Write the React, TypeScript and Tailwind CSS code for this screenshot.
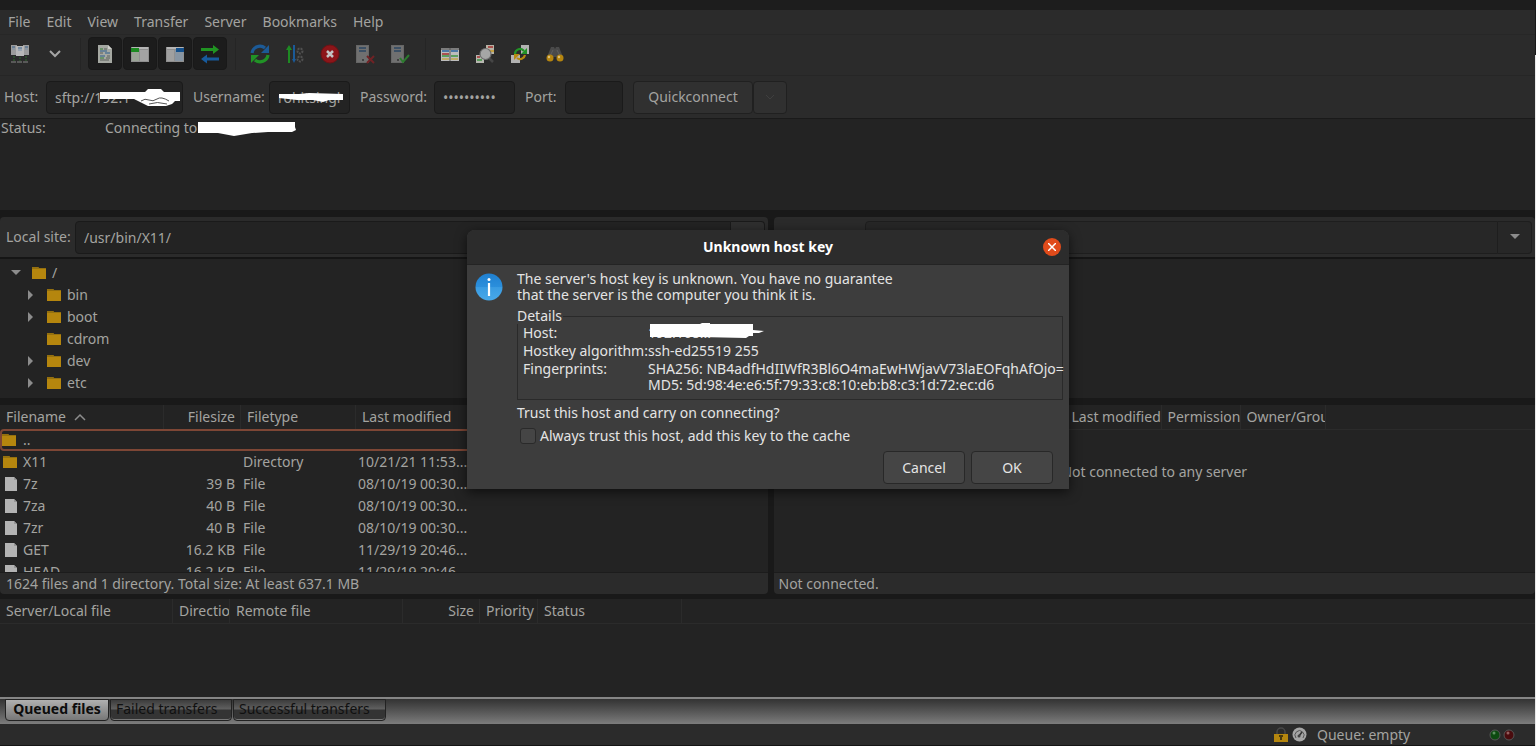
import { type ReactNode } from "react";

const menus = ["File", "Edit", "View", "Transfer", "Server", "Bookmarks", "Help"];

function SiteManagerIcon() {
  return (
    <svg width="20" height="20" viewBox="0 0 20 20">
      <rect x="1" y="1" width="6" height="10" fill="#9c9c9c" />
      <rect x="13" y="1" width="6" height="10" fill="#9c9c9c" />
      <rect x="6" y="2" width="8" height="10" fill="#b8b8b8" />
      <path d="M2 3h3M15 3h3M8 4h4" stroke="#37618c" strokeWidth="1" />
      <path d="M2 5h3M15 5h3M8 6h4" stroke="#7890a8" strokeWidth="1" />
      <path d="M4 12v5M10 13v4M16 12v5" stroke="#2f6a2c" strokeWidth="1" strokeDasharray="2 1" />
      <path d="M1 18h18" stroke="#595959" strokeWidth="2" strokeDasharray="5 1" />
    </svg>
  );
}

function LogIcon() {
  return (
    <svg width="20" height="20" viewBox="0 0 20 20">
      <path d="M3 1h10l4 4v14H3z" fill="#a5a8a2" />
      <path d="M13 1l4 4h-4z" fill="#d0d0cc" />
      <path d="M5 5h3M5 14h4" stroke="#2f7f31" strokeWidth="1" />
      <path d="M5 7h7M10 9h5M5 12h5" stroke="#2b5c8d" strokeWidth="1" />
      <path d="M5 9h3M12 12h3M11 14h4M5 16h9M9 5h3" stroke="#5b5e5a" strokeWidth="1" />
    </svg>
  );
}

function TreeIcon({ remote = false }: { remote?: boolean }) {
  return (
    <svg width="20" height="20" viewBox="0 0 20 20">
      <rect x="1" y="3" width="18" height="15" fill="#8f8f8f" />
      <rect x="2" y="3" width="16" height="2" fill="#b5b5b5" />
      <rect x="2" y="6" width="7" height="11" fill={remote ? "#a0a0a0" : "#9aa496"} />
      <rect x="10" y="6" width="8" height="11" fill={remote ? "#8795a3" : "#a3a3a3"} />
      {remote ? (
        <rect x="11" y="4" width="8" height="4" fill="#14508c" />
      ) : (
        <rect x="1" y="4" width="8" height="4" fill="#1b8a20" />
      )}
    </svg>
  );
}

function QueueIcon() {
  return (
    <svg width="20" height="20" viewBox="0 0 20 20">
      <path d="M1 4h12V1l6 4.500-6 4.500V7H1z" fill="#209422" />
      <path d="M19 13.500H7v-3l-6 4.500 6 4.500v-3h12z" fill="#175a9c" />
    </svg>
  );
}

function RefreshIcon() {
  return (
    <svg width="20" height="20" viewBox="0 0 20 20">
      <path d="M2 9a8 8 0 0 1 13-5" fill="none" stroke="#1c5a96" strokeWidth="3.200" />
      <path d="M19 1v8h-8z" fill="#1c5a96" />
      <path d="M18 11a8 8 0 0 1-13 5" fill="none" stroke="#219326" strokeWidth="3.200" />
      <path d="M1 19v-8h8z" fill="#219326" />
    </svg>
  );
}

function FilterIcon() {
  return (
    <svg width="20" height="20" viewBox="0 0 20 20">
      <path d="M4 19V4" stroke="#1e8a23" strokeWidth="2" />
      <path d="M4 1l3 5H1z" fill="#1e8a23" />
      <path d="M9 1v14" stroke="#1b5a98" strokeWidth="2" />
      <path d="M9 19l-2-4h4z" fill="#1b5a98" />
      <circle cx="15" cy="7" r="2.500" fill="none" stroke="#505050" strokeWidth="2" strokeDasharray="2 1" />
      <circle cx="15" cy="15" r="2.500" fill="none" stroke="#505050" strokeWidth="2" strokeDasharray="2 1" />
    </svg>
  );
}

function CancelIcon() {
  return (
    <svg width="20" height="20" viewBox="0 0 20 20">
      <circle cx="10" cy="10" r="9" fill="#8c1519" stroke="#6f1215" />
      <path d="M7 7l6 6M13 7l-6 6" stroke="#c4c4c4" strokeWidth="2.500" />
    </svg>
  );
}

function ServerIcon({ connect = false }: { connect?: boolean }) {
  return (
    <svg width="20" height="20" viewBox="0 0 20 20">
      <rect x="1" y="1" width="13" height="18" fill="#666" />
      <rect x="2" y="2" width="11" height="16" fill="#707070" />
      <path d="M4 4h7M4 7h7" stroke="#2b4662" strokeWidth="1.500" />
      <circle cx="8" cy="16" r="1" fill="#333" />
      {connect ? (
        <path d="M10 14l3 4 6-7" fill="none" stroke="#2b7a2d" strokeWidth="2" />
      ) : (
        <path d="M12 12l7 7M19 12l-7 7" stroke="#702225" strokeWidth="2" />
      )}
    </svg>
  );
}

function CompareIcon() {
  return (
    <svg width="20" height="20" viewBox="0 0 20 20">
      <rect x="1" y="4" width="18" height="13" fill="#bcbcbc" />
      <path d="M1 5h18" stroke="#7c7c7c" strokeWidth="2" />
      <path d="M2 7h7M11 7h7" stroke="#28619d" strokeWidth="1.500" />
      <path d="M2 10h7" stroke="#a52e2e" strokeWidth="1.500" />
      <path d="M2 12h7M11 12h7" stroke="#3d9440" strokeWidth="1.500" />
      <path d="M2 15h7M11 15h7" stroke="#c0a54b" strokeWidth="1.500" />
      <path d="M10 4v13" stroke="#555" strokeWidth="1" />
    </svg>
  );
}

function SearchFilesIcon() {
  return (
    <svg width="20" height="20" viewBox="0 0 20 20">
      <rect x="11" y="1" width="8" height="9" fill="#b7b2a4" />
      <path d="M13 3h5" stroke="#a52e2e" strokeWidth="1.500" />
      <path d="M15 7h4" stroke="#c79a21" strokeWidth="1.500" />
      <rect x="1" y="11" width="8" height="8" fill="#b7b7b0" />
      <path d="M2 13h3" stroke="#a52e2e" strokeWidth="1.500" />
      <path d="M2 16h5" stroke="#38913c" strokeWidth="1.500" />
      <path d="M14 14l4 4" stroke="#464646" strokeWidth="2.500" />
      <circle cx="10.500" cy="10" r="5.500" fill="#a6a6a6" stroke="#6c6c6c" strokeWidth="1.200" />
    </svg>
  );
}

function SyncIcon() {
  return (
    <svg width="20" height="20" viewBox="0 0 20 20">
      <rect x="11" y="1" width="8" height="9" fill="#b2b2b2" />
      <rect x="1" y="11" width="9" height="8" fill="#b2b2b2" />
      <path d="M5 10a5 5 0 0 1 9-3" fill="none" stroke="#219326" strokeWidth="2.200" />
      <path d="M17 4v6h-6z" fill="#219326" />
      <path d="M15 11a5 5 0 0 1-8 3" fill="none" stroke="#b58a10" strokeWidth="2.200" />
      <path d="M4 16v-6h6z" fill="#b58a10" />
    </svg>
  );
}

function BinocularsIcon() {
  return (
    <svg width="20" height="20" viewBox="0 0 20 20">
      <path d="M6 3h3l1 2 1-2h3l4 10H2z" fill="#4a4a4a" />
      <path d="M8 6l-3 6M12 6l3 6" stroke="#5f5f5f" />
      <circle cx="5" cy="14" r="3.500" fill="#b5850f" />
      <circle cx="15" cy="14" r="3.500" fill="#b5850f" />
      <circle cx="4" cy="13" r="1.200" fill="#dcc07c" />
      <circle cx="14" cy="13" r="1.200" fill="#dcc07c" />
    </svg>
  );
}

function Folder() {
  return (
    <svg className="shrink-0" width="15" height="14" viewBox="0 0 15 14">
      <path d="M0 1h6l1 1h7v11H0z" fill="#b5860e" />
      <path d="M0 1h6l1 1h7v1H0z" fill="#94700f" />
    </svg>
  );
}

function FileGlyph() {
  return (
    <svg className="shrink-0" width="15" height="16" viewBox="0 0 15 16">
      <path d="M2 1h9l3 3v11H2z" fill="#b3b3b3" />
      <path d="M11 1l3 3h-3z" fill="#969696" />
    </svg>
  );
}

function DownArrow() {
  return (
    <svg width="10" height="6" viewBox="0 0 10 6">
      <path d="M0 0h10L5 5z" fill="#8c8c8c" />
    </svg>
  );
}

function ToolButton({ label, pressed = false, children }: { label: string; pressed?: boolean; children: ReactNode }) {
  return (
    <button
      aria-label={label}
      className={
        pressed
          ? "flex h-[33px] w-[34px] items-center justify-center rounded border border-[#191919] bg-[#1c1c1c]"
          : "flex h-[33px] w-[34px] items-center justify-center"
      }
    >
      {children}
    </button>
  );
}

function Divider() {
  return <div className="ml-2 mr-[7px] h-8 w-px bg-[#252525]" />;
}

const field = "h-[33px] rounded-[4px] border border-[#1a1a1a] bg-[#232323] px-2 outline-none";

function QuickBar() {
  return (
    <form className="flex h-[43px] items-center border-t border-[#262626] pl-1" onSubmit={(e) => e.preventDefault()}>
      <label htmlFor="host" className="w-[42px]">Host:</label>
      <div className="relative">
        <input id="host" className={`${field} w-[137px]`} defaultValue="sftp://192.1" />
        <svg className="absolute left-[53px] top-[6px]" width="82" height="20" viewBox="0 0 82 20">
          <path d="M1 5h45l3-3h13l3 3h16v9h-5l-3 3-6 2H49l-8-4-6-3H1z" fill="#fff" />
          <path d="M42 14q4-3 8-1t8-1 12 2M50 17q8-3 18 0" fill="none" stroke="#555" />
        </svg>
      </div>
      <label htmlFor="user" className="ml-[10px] w-[76px]">Username:</label>
      <div className="relative">
        <input id="user" className={`${field} w-[81px]`} defaultValue="rohitsingh" />
        <svg className="absolute left-[10px] top-[8px]" width="66" height="16" viewBox="0 0 66 16">
          <path d="M0 5h20l10-1 34 1v6H50l-6 2-10-2H18L0 9z" fill="#fff" />
        </svg>
      </div>
      <label htmlFor="pass" className="ml-[10px] w-[74px]">Password:</label>
      <input id="pass" type="text" readOnly className={`${field} w-[81px]`} value="••••••••••" />
      <label htmlFor="port" className="ml-[10px] w-[40px]">Port:</label>
      <input id="port" className={`${field} w-[58px]`} />
      <button className="ml-[10px] h-[33px] w-[120px] rounded-[4px] border border-[#202020] bg-[#303030]">Quickconnect</button>
      <button aria-label="Recent servers" className="flex h-[33px] w-[34px] items-center justify-center rounded-[4px] border border-[#202020] bg-[#303030]">
        <svg width="10" height="6" viewBox="0 0 10 6"><path d="M1 1l4 4 4-4" fill="none" stroke="#3f3f3f" /></svg>
      </button>
    </form>
  );
}

const tree = [
  { name: "bin", hasChildren: true },
  { name: "boot", hasChildren: true },
  { name: "cdrom", hasChildren: false },
  { name: "dev", hasChildren: true },
  { name: "etc", hasChildren: true },
];

const files = [
  { name: "X11", size: "", type: "Directory", date: "10/21/21 11:53..." },
  { name: "7z", size: "39 B", type: "File", date: "08/10/19 00:30..." },
  { name: "7za", size: "40 B", type: "File", date: "08/10/19 00:30..." },
  { name: "7zr", size: "40 B", type: "File", date: "08/10/19 00:30..." },
  { name: "GET", size: "16.2 KB", type: "File", date: "11/29/19 20:46..." },
  { name: "HEAD", size: "16.2 KB", type: "File", date: "11/29/19 20:46..." },
];

const th = "h-6 overflow-hidden border-r border-[#2b2b2b] p-0 pl-[6px] text-left font-normal whitespace-nowrap";

function LocalPane() {
  return (
    <section className="flex min-w-0 flex-col">
      <div className="flex h-[42px] shrink-0 items-center rounded-t border-b-2 border-[#151515] bg-[#2b2b2b] pl-[6px] pr-[3px]">
        <label htmlFor="local" className="w-[69px]">Local site:</label>
        <div className="flex min-w-0 flex-1">
          <input id="local" className="h-[33px] min-w-0 flex-1 rounded-l-[4px] border border-[#1a1a1a] bg-[#232323] px-2 outline-none" defaultValue="/usr/bin/X11/" />
          <button aria-label="Local history" className="flex h-[33px] w-[34px] items-center justify-center rounded-r-[4px] border border-l-0 border-[#1a1a1a] bg-[#2f2f2f]"><DownArrow /></button>
        </div>
      </div>
      <ul className="h-[139px] shrink-0 overflow-hidden bg-[#232323] pt-[3px]">
        <li className="flex h-[22px] items-center pl-[11px]">
          <span className="w-[21px]"><DownArrow /></span>
          <Folder />
          <span className="ml-[5px]">/</span>
        </li>
        {tree.map((t) => (
          <li key={t.name} className="flex h-[22px] items-center pl-[28px]">
            <span className="w-[19px]">
              {t.hasChildren && <svg width="6" height="10" viewBox="0 0 6 10"><path d="M0 0l5 5-5 5z" fill="#8c8c8c" /></svg>}
            </span>
            <Folder />
            <span className="ml-[5px]">{t.name}</span>
          </li>
        ))}
      </ul>
      <div className="h-[7px] shrink-0 bg-[#191919]" />
      <div className="h-[167px] shrink-0 overflow-hidden bg-[#232323]">
        <table className="w-full table-fixed border-separate border-spacing-0">
          <colgroup>
            <col className="w-[164px]" /><col className="w-[77px]" /><col className="w-[115px]" /><col className="w-[112px]" /><col />
          </colgroup>
          <thead>
            <tr>
              <th className={th}>
                <span className="flex items-center gap-2">Filename
                  <svg width="12" height="8" viewBox="0 0 12 8"><path d="M1 7l5-5 5 5" fill="none" stroke="#8c8c8c" strokeWidth="1.500" /></svg>
                </span>
              </th>
              <th className="h-6 border-r border-[#2b2b2b] p-0 pr-[5px] text-right font-normal">Filesize</th>
              <th className={th}>Filetype</th>
              <th className={th}>Last modified</th>
              <th className={th}>Permission</th>
            </tr>
          </thead>
          <tbody>
            <tr>
              <td colSpan={5} className="h-[22px] rounded border-2 border-[#7d4635] p-0">
                <span className="flex h-[18px] items-center gap-[6px]"><Folder />..</span>
              </td>
            </tr>
            {files.map((f) => (
              <tr key={f.name}>
                <td className="h-[22px] p-0 pl-[3px]">
                  <span className="flex items-center gap-[5px]">{f.type === "File" ? <FileGlyph /> : <Folder />}{f.name}</span>
                </td>
                <td className="p-0 pr-[6px] text-right">{f.size}</td>
                <td className="p-0 pl-[2px]">{f.type}</td>
                <td className="p-0 pl-[2px] whitespace-nowrap">{f.date}</td>
                <td className="p-0" />
              </tr>
            ))}
          </tbody>
        </table>
      </div>
      <footer className="relative flex flex-1 items-center rounded-b border-t border-[#1c1c1c] bg-[#2b2b2b] pl-[6px]">
        1624 files and 1 directory. Total size: At least 637.1 MB
      </footer>
    </section>
  );
}

function RemotePane() {
  return (
    <section className="flex min-w-0 flex-col">
      <div className="flex h-[42px] shrink-0 items-center rounded-t border-b-2 border-[#151515] bg-[#2b2b2b] pl-[6px] pr-[3px]">
        <label htmlFor="remote" className="w-[85px]">Remote site:</label>
        <div className="flex min-w-0 flex-1">
          <input id="remote" className="h-[33px] min-w-0 flex-1 rounded-l-[4px] border border-[#1e1e1e] bg-[#272727] px-2 outline-none" />
          <button aria-label="Remote history" className="flex h-[33px] w-[34px] items-center justify-center rounded-r-[4px] border border-l-0 border-[#1e1e1e] bg-[#272727]"><DownArrow /></button>
        </div>
      </div>
      <div className="h-[139px] shrink-0 bg-[#232323]" />
      <div className="h-[7px] shrink-0 bg-[#191919]" />
      <div className="h-[167px] shrink-0 overflow-hidden bg-[#232323]">
        <div className="border-b border-[#2b2b2b]">
          <table className="w-[552px] table-fixed border-separate border-spacing-0">
            <colgroup>
              <col className="w-[102px]" /><col className="w-[76px]" /><col className="w-[114px]" /><col className="w-[96px]" /><col className="w-[79px]" /><col className="w-[85px]" />
            </colgroup>
            <thead>
              <tr>
                {["Filename", "Filesize", "Filetype", "Last modified", "Permission", "Owner/Group"].map((h) => (
                  <th key={h} className={th}>{h}</th>
                ))}
              </tr>
            </thead>
          </table>
        </div>
        <p className="mt-8 text-center">Not connected to any server</p>
      </div>
      <footer className="flex flex-1 items-center rounded-b border-t border-[#1c1c1c] bg-[#2b2b2b] pl-[5px]">Not connected.</footer>
    </section>
  );
}

function QueuePane() {
  return (
    <section className="flex-1 bg-[#232323]">
      <div className="border-b border-[#2b2b2b]">
        <table className="w-[682px] table-fixed border-separate border-spacing-0">
          <colgroup>
            <col className="w-[173px]" /><col className="w-[57px]" /><col className="w-[173px]" /><col className="w-[77px]" /><col className="w-[58px]" /><col className="w-[144px]" />
          </colgroup>
          <thead>
            <tr>
              <th className={th}>Server/Local file</th>
              <th className={th}>Direction</th>
              <th className={th}>Remote file</th>
              <th className="h-6 border-r border-[#2b2b2b] p-0 pr-[5px] text-right font-normal">Size</th>
              <th className={th}>Priority</th>
              <th className={th}>Status</th>
            </tr>
          </thead>
        </table>
      </div>
    </section>
  );
}

function Dialog() {
  return (
    <div className="absolute inset-x-0 top-[230px] flex justify-center">
      <div role="dialog" aria-labelledby="dlg-title" className="w-[602px] rounded-t-lg bg-[#3d3d3d] text-[#e4e4e4] shadow-[0_3px_12px_rgba(0,0,0,0.6)]">
        <header className="relative flex h-[35px] items-center justify-center rounded-t-lg border-b border-[#242424] bg-[#2c2c2c]">
          <h1 id="dlg-title" className="font-bold text-white">Unknown host key</h1>
          <button aria-label="Close" className="absolute right-2 top-2 flex size-[18px] items-center justify-center rounded-full bg-[#e04b1b]">
            <svg width="8" height="8" viewBox="0 0 8 8"><path d="M0 0l8 8M8 0L0 8" stroke="#fff" strokeWidth="1.500" /></svg>
          </button>
        </header>
        <div className="flex px-[6px] pt-[6px]">
          <svg className="ml-[2px] mt-[2px] shrink-0" width="28" height="28" viewBox="0 0 28 28">
            <defs>
              <linearGradient id="info" x2="0" y2="1"><stop stopColor="#2080d0" /><stop offset="0.500" stopColor="#2b8fdc" /><stop offset="0.520" stopColor="#3a9ce2" /><stop offset="1" stopColor="#48a8e8" /></linearGradient>
            </defs>
            <circle cx="14" cy="14" r="13.500" fill="url(#info)" />
            <circle cx="14" cy="6.500" r="1.500" fill="#fff" />
            <path d="M14 10v13" stroke="#fff" strokeWidth="2.200" />
          </svg>
          <div className="ml-[14px] min-w-0 flex-1 leading-4">
            <p>The server's host key is unknown. You have no guarantee<br />that the server is the computer you think it is.</p>
            <fieldset className="mt-[5px] min-w-0 border border-[#2a2a2a] px-[5px] pb-[6px]">
              <legend className="-ml-[6px] pr-px">Details</legend>
              <dl className="grid grid-cols-[125px_1fr] gap-y-[2px] pt-px">
                <dt>Host:</dt>
                <dd className="relative">192.168...
                  <svg className="absolute left-0 top-[-3px]" width="118" height="18" viewBox="0 0 118 18"><path d="M2 2h50l2-1h8v1h43v6l11 1-5 2h-6v3h-4l-3 2-46-1H2z" fill="#fff" /></svg>
                </dd>
                <dt>Hostkey algorithm:</dt>
                <dd>ssh-ed25519 255</dd>
                <dt>Fingerprints:</dt>
                <dd className="whitespace-nowrap">SHA256: NB4adfHdIIWfR3Bl6O4maEwHWjavV73laEOFqhAfOjo=<br />MD5: 5d:98:4e:e6:5f:79:33:c8:10:eb:b8:c3:1d:72:ec:d6</dd>
              </dl>
            </fieldset>
            <p className="mt-[5px]">Trust this host and carry on connecting?</p>
            <label className="mt-[7px] flex items-center gap-[4px] pl-[3px]">
              <input type="checkbox" className="size-4 appearance-none rounded-[3px] border border-[#2a2a2a] bg-[#454545]" />
              Always trust this host, add this key to the cache
            </label>
          </div>
        </div>
        <div className="flex justify-end gap-[6px] pb-[5px] pr-[16px] pt-[7px]">
          <button className="h-[33px] w-[82px] rounded-[4px] border border-[#282828] bg-[#454545]">Cancel</button>
          <button className="h-[33px] w-[82px] rounded-[4px] border border-[#282828] bg-[#454545]">OK</button>
        </div>
      </div>
    </div>
  );
}

export default function App() {
  return (
    <main className="relative flex min-h-screen flex-col overflow-hidden bg-[#191919] pr-px font-['Noto_Sans',sans-serif] text-[14px] leading-5 text-[#a3a3a0]">
      <div className="absolute bottom-0 right-0 top-[55px] w-px bg-[#e8e8e8]" />
      <div className="h-[10px] bg-[#1d1d1d]" />
      <div className="bg-[#2b2b2b]">
        <nav className="flex h-6 items-center gap-4 pl-2">
          {menus.map((m) => <button key={m}>{m}</button>)}
        </nav>
        <div className="flex h-[41px] items-center border-t border-[#272727] pb-[3px] pl-[3px]">
          <ToolButton label="Site manager"><SiteManagerIcon /></ToolButton>
          <button aria-label="Site list" className="flex h-8 w-[35px] items-center justify-center">
            <svg width="12" height="8" viewBox="0 0 12 8"><path d="M1 1l5 5 5-5" fill="none" stroke="#a5a5a5" strokeWidth="2" /></svg>
          </button>
          <Divider />
          <div className="flex gap-px">
            <ToolButton label="Message log" pressed><LogIcon /></ToolButton>
            <ToolButton label="Local tree" pressed><TreeIcon /></ToolButton>
            <ToolButton label="Remote tree" pressed><TreeIcon remote /></ToolButton>
            <ToolButton label="Transfer queue" pressed><QueueIcon /></ToolButton>
          </div>
          <Divider />
          <div className="flex gap-px">
            <ToolButton label="Refresh"><RefreshIcon /></ToolButton>
            <ToolButton label="Process queue"><FilterIcon /></ToolButton>
            <ToolButton label="Cancel"><CancelIcon /></ToolButton>
            <ToolButton label="Disconnect"><ServerIcon /></ToolButton>
            <ToolButton label="Reconnect"><ServerIcon connect /></ToolButton>
          </div>
          <Divider />
          <div className="flex gap-px">
            <ToolButton label="Directory comparison"><CompareIcon /></ToolButton>
            <ToolButton label="Filename filters"><SearchFilesIcon /></ToolButton>
            <ToolButton label="Synchronized browsing"><SyncIcon /></ToolButton>
            <ToolButton label="Find files"><BinocularsIcon /></ToolButton>
          </div>
        </div>
        <QuickBar />
      </div>
      <div className="h-[92px] border-t border-[#1a1a1a] bg-[#232323]">
        <div className="flex h-[18px] items-center pl-px">
          <span className="w-[104px]">Status:</span>
          <span className="relative">Connecting to
            <svg className="absolute left-full top-[2px] ml-px" width="100" height="16" viewBox="0 0 100 16"><path d="M0 2h97v5l1 3-4 2H70l-16 1-18 3-16-3H0z" fill="#fff" /></svg>
          </span>
        </div>
      </div>
      <div className="mt-[7px] grid h-[377px] grid-cols-[50%_1fr] gap-[6px]">
        <LocalPane />
        <RemotePane />
      </div>
      <div className="mt-[5px] flex flex-1 flex-col">
        <QueuePane />
      </div>
      <div role="tablist" className="flex h-[27px] items-start gap-px border-t-2 border-[#858585] bg-linear-to-b from-[#333] to-[#7d7d7d] pl-[5px]">
        <button role="tab" aria-selected="true" className="h-[22px] w-[104px] rounded-b border border-[#222] bg-linear-to-b from-[#b0b0b0] to-[#777] pb-[2px] font-bold leading-4 text-[#0c0c0c]">Queued files</button>
        <button role="tab" className="h-[22px] w-[122px] rounded-b border border-[#222] bg-linear-to-b from-[#3c3c3c] from-0% via-[#606060] via-45% to-[#343434] to-50% pb-[2px] pl-[5px] text-left leading-4 text-[#101010] shadow-[inset_0_-1px_0_#777]">Failed transfers</button>
        <button role="tab" className="h-[22px] w-[153px] rounded-b border border-[#222] bg-linear-to-b from-[#3c3c3c] from-0% via-[#606060] via-45% to-[#343434] to-50% pb-[2px] pl-[5px] text-left leading-4 text-[#101010] shadow-[inset_0_-1px_0_#777]">Successful transfers</button>
      </div>
      <footer className="flex h-[22px] items-center justify-end border-b border-[#151515] bg-[#2b2b2b] pr-[20px]">
        <svg width="16" height="16" viewBox="0 0 16 16">
          <path d="M4 7V5a4 4 0 0 1 8 0v2" fill="none" stroke="#484848" strokeWidth="1.500" />
          <rect x="1" y="7" width="14" height="8" fill="#b5860e" />
          <path d="M6 9h4M8 9v4" stroke="#4a390c" strokeWidth="2" />
        </svg>
        <svg className="ml-[3px]" width="15" height="16" viewBox="0 0 15 16">
          <circle cx="7.500" cy="7.500" r="7" fill="#a6a6a6" />
          <path d="M4 11a4.500 4.500 0 1 1 7 0" fill="none" stroke="#555" />
          <path d="M7 9l3-4" stroke="#333" strokeWidth="1.500" />
          <circle cx="7" cy="9" r="1.500" fill="#444" />
        </svg>
        <span className="ml-[10px] w-[172px]">Queue: empty</span>
        <svg width="26" height="12" viewBox="0 0 26 12">
          <circle cx="6" cy="6" r="5" fill="#0c4a10" stroke="#555" />
          <circle cx="5" cy="4" r="1.500" fill="#5c8f5e" />
          <circle cx="20" cy="6" r="5" fill="#4a0c0e" stroke="#555" />
          <circle cx="19" cy="4" r="1.500" fill="#95605f" />
        </svg>
      </footer>
      <Dialog />
    </main>
  );
}
